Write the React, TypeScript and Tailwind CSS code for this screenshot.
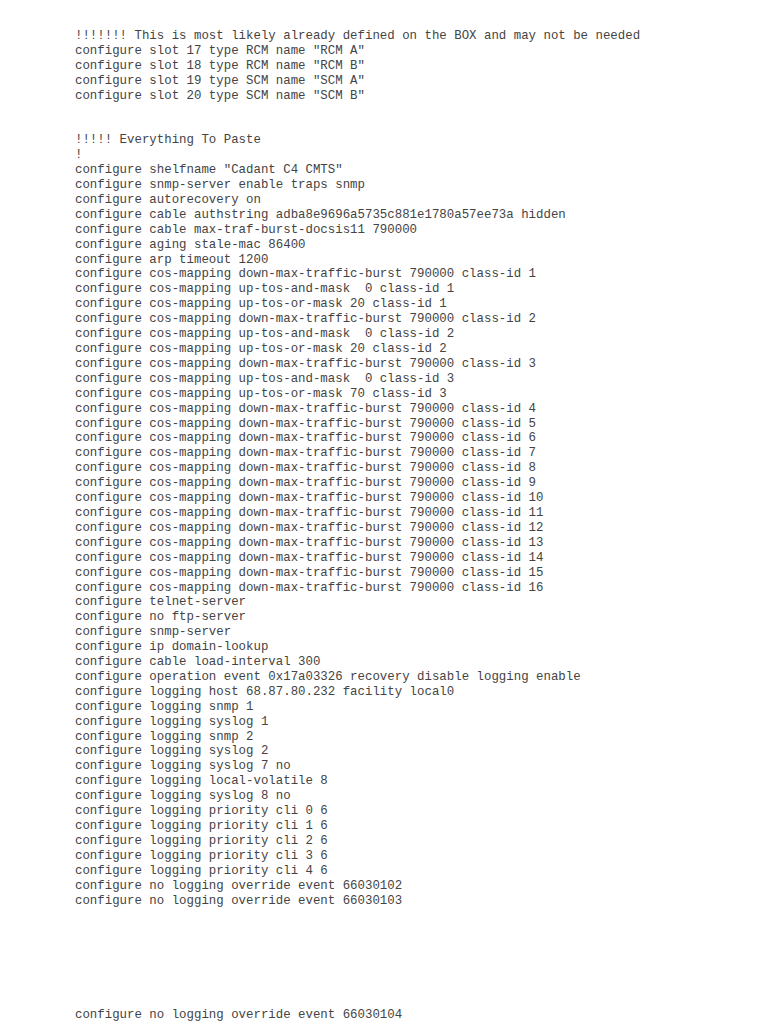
import React from 'react';

const header = [
    '!!!!!!! This is most likely already defined on the BOX and may not be needed',
    'configure slot 17 type RCM name "RCM A"',
    'configure slot 18 type RCM name "RCM B"',
    'configure slot 19 type SCM name "SCM A"',
    'configure slot 20 type SCM name "SCM B"',
];

const burst = (id: number) => `configure cos-mapping down-max-traffic-burst 790000 class-id ${id}`;

const paste = [
    '!!!!! Everything To Paste',
    '!',
    'configure shelfname "Cadant C4 CMTS"',
    'configure snmp-server enable traps snmp',
    'configure autorecovery on',
    'configure cable authstring adba8e9696a5735c881e1780a57ee73a hidden',
    'configure cable max-traf-burst-docsis11 790000',
    'configure aging stale-mac 86400',
    'configure arp timeout 1200',
    burst(1),
    'configure cos-mapping up-tos-and-mask  0 class-id 1',
    'configure cos-mapping up-tos-or-mask 20 class-id 1',
    burst(2),
    'configure cos-mapping up-tos-and-mask  0 class-id 2',
    'configure cos-mapping up-tos-or-mask 20 class-id 2',
    burst(3),
    'configure cos-mapping up-tos-and-mask  0 class-id 3',
    'configure cos-mapping up-tos-or-mask 70 class-id 3',
    ...[4, 5, 6, 7, 8, 9, 10, 11, 12, 13, 14, 15, 16].map(burst),
    'configure telnet-server',
    'configure no ftp-server',
    'configure snmp-server',
    'configure ip domain-lookup',
    'configure cable load-interval 300',
    'configure operation event 0x17a03326 recovery disable logging enable',
    'configure logging host 68.87.80.232 facility local0',
    'configure logging snmp 1',
    'configure logging syslog 1',
    'configure logging snmp 2',
    'configure logging syslog 2',
    'configure logging syslog 7 no',
    'configure logging local-volatile 8',
    'configure logging syslog 8 no',
    'configure logging priority cli 0 6',
    'configure logging priority cli 1 6',
    'configure logging priority cli 2 6',
    'configure logging priority cli 3 6',
    'configure logging priority cli 4 6',
    'configure no logging override event 66030102',
    'configure no logging override event 66030103',
];

const nextPage = ['configure no logging override event 66030104'];

const Block: React.FC<{ lines: string[]; className?: string }> = ({ lines, className }) => (
    <pre className={`whitespace-pre ${className ?? ''}`}>
        {lines.join('\n')}
    </pre>
);

export default function App() {
    return (
        <div className="w-[768px] h-[1024px] overflow-hidden bg-white text-[#444444] text-[12.4px] leading-[14.9px] font-['Liberation_Mono',monospace]">
            <div className="pt-[29px] pl-[75px]">
                <Block lines={header} />
                <Block lines={paste} className="mt-[29.8px]" />
                <Block lines={nextPage} className="mt-[100px]" />
            </div>
        </div>
    );
}
